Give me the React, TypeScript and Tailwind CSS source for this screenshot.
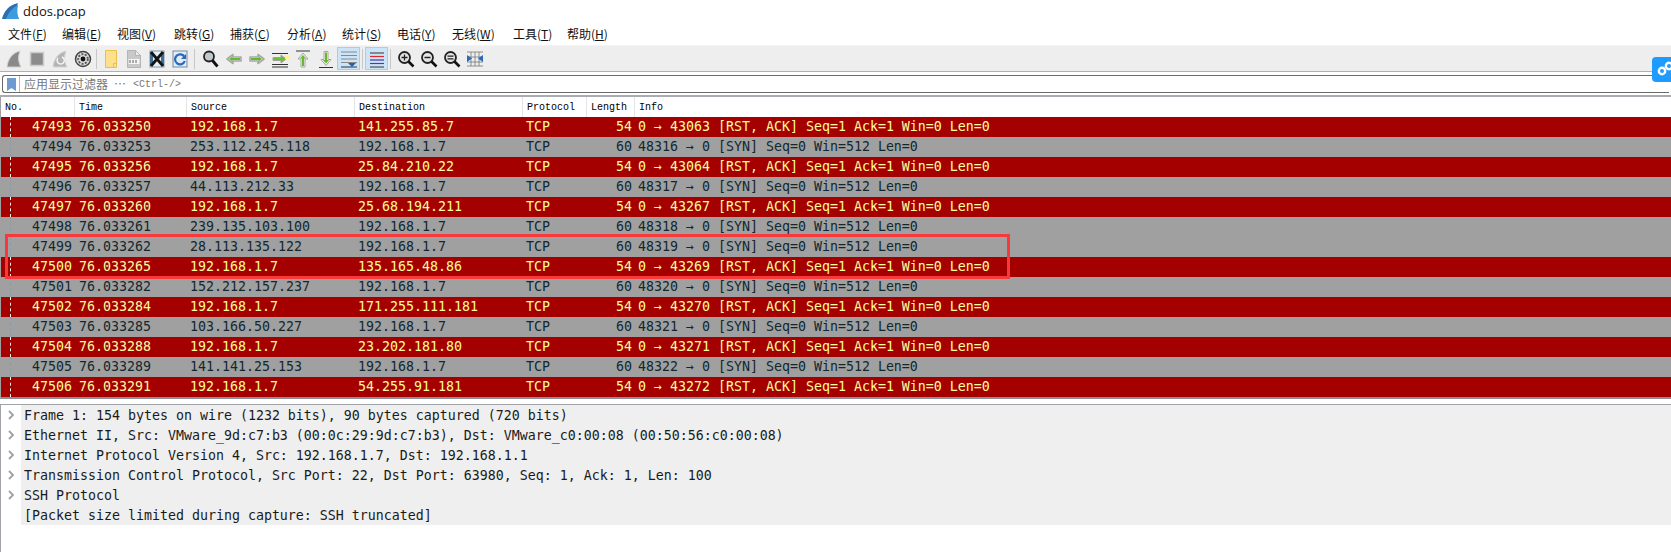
const mono = "font-['DejaVu_Sans_Mono',monospace]";
const small = "font-['Liberation_Mono',monospace]";

type Row = [string, string, string, string, string];

const rows: Row[] = [
  ["47493", "76.033250", "192.168.1.7", "141.255.85.7", "43063"],
  ["47494", "76.033253", "253.112.245.118", "192.168.1.7", "48316"],
  ["47495", "76.033256", "192.168.1.7", "25.84.210.22", "43064"],
  ["47496", "76.033257", "44.113.212.33", "192.168.1.7", "48317"],
  ["47497", "76.033260", "192.168.1.7", "25.68.194.211", "43267"],
  ["47498", "76.033261", "239.135.103.100", "192.168.1.7", "48318"],
  ["47499", "76.033262", "28.113.135.122", "192.168.1.7", "48319"],
  ["47500", "76.033265", "192.168.1.7", "135.165.48.86", "43269"],
  ["47501", "76.033282", "152.212.157.237", "192.168.1.7", "48320"],
  ["47502", "76.033284", "192.168.1.7", "171.255.111.181", "43270"],
  ["47503", "76.033285", "103.166.50.227", "192.168.1.7", "48321"],
  ["47504", "76.033288", "192.168.1.7", "23.202.181.80", "43271"],
  ["47505", "76.033289", "141.141.25.153", "192.168.1.7", "48322"],
  ["47506", "76.033291", "192.168.1.7", "54.255.91.181", "43272"],
];

const details = [
  "Frame 1: 154 bytes on wire (1232 bits), 90 bytes captured (720 bits)",
  "Ethernet II, Src: VMware_9d:c7:b3 (00:0c:29:9d:c7:b3), Dst: VMware_c0:00:08 (00:50:56:c0:00:08)",
  "Internet Protocol Version 4, Src: 192.168.1.7, Dst: 192.168.1.1",
  "Transmission Control Protocol, Src Port: 22, Dst Port: 63980, Seq: 1, Ack: 1, Len: 100",
  "SSH Protocol",
];

const menus: [string, string, string][] = [
  ["文件", "F", "w-[54px]"],
  ["编辑", "E", "w-[55px]"],
  ["视图", "V", "w-[57px]"],
  ["跳转", "G", "w-[56px]"],
  ["捕获", "C", "w-[57px]"],
  ["分析", "A", "w-[55px]"],
  ["统计", "S", "w-[55px]"],
  ["电话", "Y", "w-[55px]"],
  ["无线", "W", "w-[61px]"],
  ["工具", "T", "w-[54px]"],
  ["帮助", "H", "w-[54px]"],
];

const headers: [string, string][] = [
  ["No.", "w-[74px]"],
  ["Time", "w-[112px]"],
  ["Source", "w-[168px]"],
  ["Destination", "w-[168px]"],
  ["Protocol", "w-[64px]"],
  ["Length", "w-[48px]"],
  ["Info", "flex-1"],
];

function Ico({ children }: { children: React.ReactNode }) {
  return (
    <svg width="20" height="20" viewBox="0 0 20 20" fill="none">
      {children}
    </svg>
  );
}

function Btn({ children, on }: { children: React.ReactNode; on?: boolean }) {
  return (
    <div
      className={
        on
          ? "w-[23px] h-[23px] flex items-center justify-center bg-[#cce4f7] border border-[#99d1ff]"
          : "w-[23px] h-[23px] flex items-center justify-center"
      }
    >
      {children}
    </div>
  );
}

function Sep({ wide }: { wide?: boolean }) {
  return (
    <div
      className={
        wide ? "w-[1px] h-[20px] bg-[#c8c8c8] ml-[3px] mr-[4px]" : "w-[1px] h-[20px] bg-[#c8c8c8] mx-[2px]"
      }
    />
  );
}

function Lens({ mark }: { mark?: string }) {
  return (
    <Ico>
      <circle cx="8.500" cy="8.500" r="5.500" fill="#e4e4e4" stroke="#222" strokeWidth="1.800" />
      <path d="M12.500 12.500l5 5" stroke="#111" strokeWidth="2.600" />
      {mark === "plus" && <path d="M5.500 8.500h6M8.500 5.500v6" stroke="#222" strokeWidth="1.300" />}
      {mark === "minus" && <path d="M5.500 8.500h6" stroke="#222" strokeWidth="1.500" />}
      {mark === "equal" && <path d="M5.500 7.200h6M5.500 9.800h6" stroke="#222" strokeWidth="1.200" />}
    </Ico>
  );
}

function ArrowH({ flip }: { flip?: boolean }) {
  return (
    <Ico>
      <g transform={flip ? "matrix(-1 0 0 1 20 0)" : undefined}>
        <path d="M3 10l6-4.500v2.500h8v4H9v2.500z" fill="#f0f4ea" stroke="#a8a8a8" strokeWidth="1.600" strokeLinejoin="round" />
        <path d="M5 10l3.500-2.500v1.500H16v2H8.500v1.500z" fill="#66b82c" />
      </g>
    </Ico>
  );
}

function Toolbar() {
  return (
    <div className="h-[25px] bg-[#eeeeee] flex items-center pl-[2px]">
      <Btn>
        <Ico>
          <path d="M3 18C4 10 8 4 16 2c-2 5-2 11 1 16z" fill="#8a8a8a" stroke="#d0d0d0" />
        </Ico>
      </Btn>
      <Btn>
        <Ico>
          <rect x="3.500" y="3.500" width="13" height="13" fill="#8c8c8c" stroke="#cccccc" strokeWidth="1.500" />
        </Ico>
      </Btn>
      <Btn>
        <Ico>
          <path d="M3 18C4 10 8 4 16 2c-2 5-2 11 1 16z" fill="#b4b4b4" stroke="#d4d4d4" />
          <path d="M12 8a3.600 3.600 0 1 1-4 1" stroke="#f4f4f4" strokeWidth="1.500" />
        </Ico>
      </Btn>
      <Btn>
        <Ico>
          <circle cx="10" cy="10" r="7.500" fill="#d8d8d8" stroke="#444" strokeWidth="1.500" />
          <circle cx="10" cy="10" r="4.800" fill="none" stroke="#555" strokeWidth="1.800" strokeDasharray="2 1.400" />
          <circle cx="10" cy="10" r="2.400" fill="#111" />
        </Ico>
      </Btn>
      <Sep />
      <Btn>
        <Ico>
          <path d="M4.500 1.500h11v17h-11z" fill="#fde08c" stroke="#e8c04c" />
          <path d="M12.500 14.500h3v4h-3z" fill="#fde08c" stroke="#e8c04c" />
        </Ico>
      </Btn>
      <Btn>
        <Ico>
          <path d="M3.500 1.500h8l5 5v12h-13z" fill="#c8c8c8" stroke="#b4b4b4" />
          <path d="M11.500 1.500v5h5z" fill="#eeeeee" stroke="#b4b4b4" />
          <rect x="4.500" y="10" width="11" height="5" fill="#f6f6f6" />
          <path d="M6 11v3M9 11v3M12 11v3" stroke="#777" strokeWidth="1.200" />
        </Ico>
      </Btn>
      <Btn>
        <Ico>
          <rect x="3" y="2" width="14" height="16" fill="#e8f0f6" stroke="#7a95ac" />
          <path d="M3 3h3v14H3zM14 3h3v14h-3z" fill="#3f6f96" />
          <path d="M4 3l12 14M16 3L4 17" stroke="#141414" strokeWidth="2.800" />
        </Ico>
      </Btn>
      <Btn>
        <Ico>
          <rect x="3" y="2" width="14" height="16" fill="#e0ecf6" stroke="#6f8ba4" />
          <path d="M14.500 8a5 5 0 1 0 .3 4" stroke="#2a68b8" strokeWidth="2.200" />
          <path d="M16 5v5h-5z" fill="#2a68b8" />
        </Ico>
      </Btn>
      <Sep wide />
      <Btn>
        <Ico>
          <circle cx="8" cy="7.500" r="5" fill="#c0c8cc" stroke="#222" strokeWidth="1.800" />
          <path d="M11.500 11.500l5 6" stroke="#111" strokeWidth="2.800" />
        </Ico>
      </Btn>
      <Btn>
        <ArrowH />
      </Btn>
      <Btn>
        <ArrowH flip />
      </Btn>
      <Btn>
        <Ico>
          <path d="M2 4.500h16M2 15.500h16M2 18h16" stroke="#333" strokeWidth="1" />
          <path d="M3 8.500h8V6l5 4-5 4v-2.500H3z" fill="#6cc02a" stroke="#a0a0a0" />
          <rect x="15" y="7" width="4" height="3" fill="#fff080" />
        </Ico>
      </Btn>
      <Btn>
        <Ico>
          <path d="M3 2h14" stroke="#333" strokeWidth="1" />
          <path d="M10 4l5 6h-3v8H8v-8H5z" fill="#f0f4ea" stroke="#a8a8a8" />
          <path d="M10 6l3 3.500h-2V17H9V9.500H7z" fill="#66b82c" />
        </Ico>
      </Btn>
      <Btn>
        <Ico>
          <path d="M3 18.500h14" stroke="#333" strokeWidth="1" />
          <path d="M10 16.500l5-6h-3v-8H8v8H5z" fill="#f0f4ea" stroke="#a8a8a8" />
          <path d="M10 14.500l3-3.500h-2V3.500H9V11H7z" fill="#66b82c" />
        </Ico>
      </Btn>
      <Btn on>
        <Ico>
          <path d="M2 3h16M2 6.500h16M2 10h16M2 13.500h16" stroke="#888" strokeWidth="1" />
          <path d="M2 18h16" stroke="#333" strokeWidth="1" />
          <path d="M9 14h8l-4 4z" fill="#2a5ea8" />
        </Ico>
      </Btn>
      <Sep />
      <Btn on>
        <Ico>
          <path d="M3 4h14" stroke="#333" strokeWidth="1" />
          <path d="M3 7.500h14" stroke="#e02828" strokeWidth="1.200" />
          <path d="M3 11h14" stroke="#3a3aa8" strokeWidth="1.200" />
          <path d="M3 14.500h14" stroke="#7a2a8a" strokeWidth="1.200" />
          <path d="M3 18h14" stroke="#333" strokeWidth="1" />
        </Ico>
      </Btn>
      <Sep />
      <div className="w-[1px]" />
      <Btn>
        <Lens mark="plus" />
      </Btn>
      <Btn>
        <Lens mark="minus" />
      </Btn>
      <Btn>
        <Lens mark="equal" />
      </Btn>
      <Btn>
        <Ico>
          <path d="M2 3h16M2 17h16M6 3v14M14 3v14M10 3v14M2 8h16M2 13h16" stroke="#777" strokeWidth="0.800" />
          <path d="M2 6v7l5-3.500zM18 6v7l-5-3.500z" fill="#2a68b8" />
        </Ico>
      </Btn>
    </div>
  );
}

function PacketRow({ row }: { row: Row }) {
  const [no, time, src, dst, port] = row;
  const rst = port.startsWith("4") && src === "192.168.1.7";
  return (
    <div
      className={
        rst
          ? `h-[20px] flex items-center text-[13.29px] bg-[#a40000] text-[#fffc9c] ${mono}`
          : `h-[20px] flex items-center text-[13.29px] bg-[#a0a0a0] text-[#12272e] ${mono}`
      }
    >
      <div className="w-[73px] h-full flex">
        <div
          className={
            rst
              ? "ml-[9px] h-full border-l border-dashed border-[#f4f0e0]"
              : "ml-[9px] h-full border-l border-dashed border-[#8c9aa6]"
          }
        />
        <div className="flex-1 text-right pr-[2px] leading-[20px]">{no}</div>
      </div>
      <div className="w-[112px] pl-[5px]">{time}</div>
      <div className="w-[168px] pl-[4px]">{src}</div>
      <div className="w-[168px] pl-[4px]">{dst}</div>
      <div className="w-[64px] pl-[4px]">TCP</div>
      <div className="w-[48px] text-right pr-[2px]">{rst ? "54" : "60"}</div>
      <div className="flex-1 pl-[4px] whitespace-pre">
        {rst
          ? `0 → ${port} [RST, ACK] Seq=1 Ack=1 Win=0 Len=0`
          : `${port} → 0 [SYN] Seq=0 Win=512 Len=0`}
      </div>
    </div>
  );
}

export default function App() {
  return (
    <div className="relative w-[1671px] h-[552px] overflow-hidden bg-white font-['Liberation_Sans',sans-serif] text-[#111]">
      {/* title bar */}
      <div className="h-[22px] flex items-center pl-[2px]">
        <svg width="17" height="16" viewBox="0 0 17 16">
          <path d="M0 16C2 8 7 2 16 0c-2 5-2 11 1 16z" fill="#2a6fb0" />
          <path d="M4 16C6 10 10 5 16 2c-1 5-1 10 1 14z" fill="#3f9ade" />
        </svg>
        <span className="ml-[4px] pt-[2px] text-[13px] font-['Open_Sans',sans-serif]">ddos.pcap</span>
      </div>

      {/* menu */}
      <div className="h-[23px] flex items-center pl-[8px] text-[12px] font-['Noto_Sans_CJK_SC',sans-serif]">
        {menus.map(([label, key, width]) => (
          <div key={key} className={`${width} whitespace-nowrap`}>
            {label}(<span className="underline">{key}</span>)
          </div>
        ))}
      </div>

      <div className="h-[1px] bg-[#f4f4f4]" />
      <Toolbar />
      <div className="h-[1px] bg-[#b0b0b0]" />

      {/* filter */}
      <div className="h-[3px]" />
      <div className="h-[18px] mx-[2px] border-y border-l border-[#6a6a6a] rounded-l-[3px] flex items-center">
        <div className="w-[17px] h-full flex items-center justify-center border-r border-[#b8b8b8]">
          <svg width="9" height="13" viewBox="0 0 9 13">
            <path d="M0 0h9v13L4.500 10 0 13z" fill="#6f9bd1" />
          </svg>
        </div>
        <span className="ml-[4px] text-[12px] text-[#777] whitespace-pre font-['Noto_Sans_CJK_SC',sans-serif]">
          应用显示过滤器
        </span>
        <span className="ml-[6px] w-[12px] text-[12px] text-[#777] font-['Noto_Sans_CJK_SC',sans-serif]">⋯</span>
        <span className={`ml-[7px] text-[10px] text-[#777] whitespace-pre ${small}`}>&lt;Ctrl-/&gt;</span>
      </div>
      <div className="h-[2px]" />
      <div className="h-[2px] bg-[#a8acb0]" />

      {/* packet list */}
      <div className="border-l border-[#a0a0a0]">
        <div className={`h-[20px] flex items-center text-[10px] text-black ${small}`}>
          {headers.map(([name, width]) => (
            <div
              key={name}
              className={`${width} h-full pl-[4px] pt-[1px] leading-[20px] border-r border-[#e5e5e5] last:border-r-0`}
            >
              {name}
            </div>
          ))}
        </div>
        {rows.map((row) => (
          <PacketRow key={row[0]} row={row} />
        ))}
        <div className="h-[2px] bg-[#8a9098]" />
      </div>
      <div className="h-[5px]" />

      {/* details */}
      <div className="border-t border-l border-[#a0a4a8] h-full">
        {details.map((line) => (
          <div key={line} className="h-[20px] flex">
            <div className="w-[20px] flex items-center justify-center">
              <svg width="8" height="10" viewBox="0 0 8 10" fill="none">
                <path d="M2 1l4 4-4 4" stroke="#a0a0a0" strokeWidth="1.800" />
              </svg>
            </div>
            <div className={`flex-1 bg-[#efefef] pl-[3px] text-[13.29px] leading-[22px] text-[#1a1a1a] ${mono}`}>
              {line}
            </div>
          </div>
        ))}
        <div className="h-[20px] flex">
          <div className="w-[20px]" />
          <div className={`flex-1 bg-[#efefef] pl-[3px] text-[13.29px] leading-[22px] h-[20px] text-[#1a1a1a] ${mono}`}>
            [Packet size limited during capture: SSH truncated]
          </div>
        </div>
      </div>

      {/* annotation box */}
      <div className="absolute left-[5px] top-[234px] w-[1005px] h-[45px] border-[3px] border-[#f8393c]" />

      {/* floating link button */}
      <div className="absolute left-[1652px] top-[57px] w-[19px] h-[25px] bg-[#1e9bff] rounded-l-[4px] overflow-hidden">
        <svg width="19" height="25" viewBox="0 0 19 25" fill="none">
          <circle cx="10" cy="14" r="3.200" stroke="#fff" strokeWidth="2.400" />
          <circle cx="17" cy="9" r="3.200" stroke="#fff" strokeWidth="2.400" />
        </svg>
      </div>
    </div>
  );
}
